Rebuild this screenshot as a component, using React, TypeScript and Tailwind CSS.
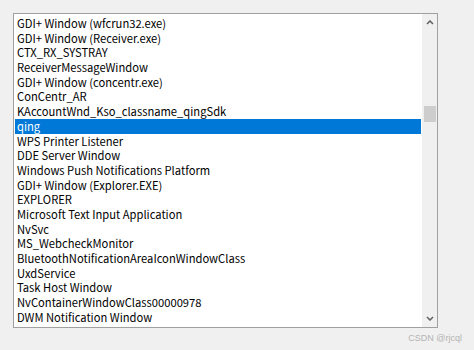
const items = [
  "GDI+ Window (wfcrun32.exe)",
  "GDI+ Window (Receiver.exe)",
  "CTX_RX_SYSTRAY",
  "ReceiverMessageWindow",
  "GDI+ Window (concentr.exe)",
  "ConCentr_AR",
  "KAccountWnd_Kso_classname_qingSdk",
  "qing",
  "WPS Printer Listener",
  "DDE Server Window",
  "Windows Push Notifications Platform",
  "GDI+ Window (Explorer.EXE)",
  "EXPLORER",
  "Microsoft Text Input Application",
  "NvSvc",
  "MS_WebcheckMonitor",
  "BluetoothNotificationAreaIconWindowClass",
  "UxdService",
  "Task Host Window",
  "NvContainerWindowClass00000978",
  "DWM Notification Window",
];

const selected = "qing";

export default function App() {
  return (
    <div className="w-[474px] h-[350px] bg-[#f0f0f0] pt-[13px] pl-[13px] font-['Noto_Sans_CJK_SC',sans-serif] relative overflow-hidden">
      {/* listbox */}
      <div className="w-[425px] h-[315px] border border-[#a0a0a0] bg-white flex">
        <div className="flex-1 pt-[2px] px-[1px] overflow-hidden">
          {items.map((name) => (
            <div
              key={name}
              className={`h-[14.7px] leading-[14.7px] px-[2px] text-[11.2px] whitespace-nowrap ${
                name === selected ? "bg-[#0078d7] text-white" : "text-black"
              }`}
            >
              {name}
            </div>
          ))}
        </div>
        {/* scrollbar */}
        <div className="w-[15px] bg-[#f0f0f0] flex flex-col items-center">
          <div className="h-[17px] flex items-center justify-center">
            <svg width="8" height="5" viewBox="0 0 8 5">
              <path d="M1 4 L4 1 L7 4" fill="none" stroke="#606060" strokeWidth="1.5" />
            </svg>
          </div>
          <div className="mt-[75px] w-[12px] h-[16px] bg-[#cdcdcd]" />
          <div className="flex-1" />
          <div className="h-[17px] flex items-center justify-center">
            <svg width="8" height="5" viewBox="0 0 8 5">
              <path d="M1 1 L4 4 L7 1" fill="none" stroke="#606060" strokeWidth="1.5" />
            </svg>
          </div>
        </div>
      </div>
      <div className="absolute right-[12px] bottom-[5px] text-[9px] text-[#b4b4b4] font-['Liberation_Sans',sans-serif]">
        CSDN @rjcql
      </div>
    </div>
  );
}
